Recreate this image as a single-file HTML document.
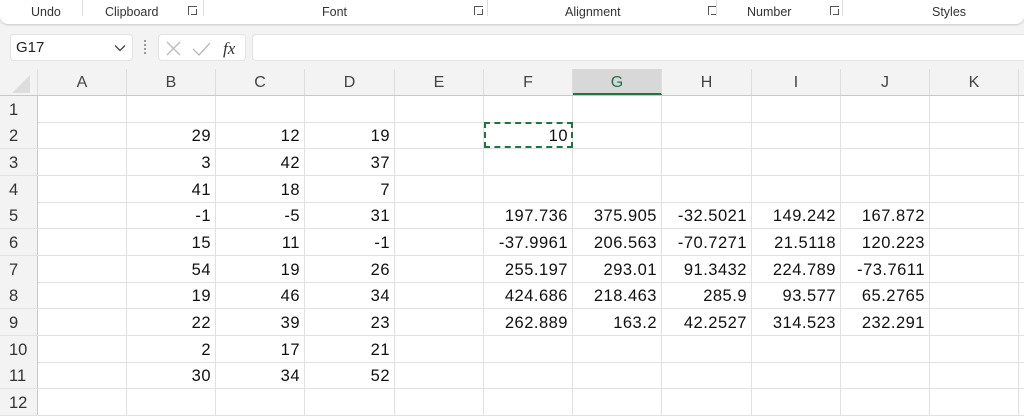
<!DOCTYPE html>
<html><head><style>
*{margin:0;padding:0;box-sizing:border-box}
body{width:1024px;height:420px;overflow:hidden;background:#f3f3f3;font-family:"Liberation Sans",sans-serif;position:relative}
.rib{position:absolute;left:0;top:0;width:1024px;height:24px;background:#fff;border-radius:0 0 8px 8px;box-shadow:0 1px 2px rgba(0,0,0,.18);font-size:12.5px;color:#333}
.rib span{position:absolute;top:5px}
.sep{position:absolute;top:0;width:1px;height:16px;background:#ddd}
.ic{position:absolute;top:6px;width:9px;height:9px;border:1px solid #555;border-right:none;border-bottom:none}
.ic:after{content:"";position:absolute;left:2px;top:2px;width:5px;height:5px;border-right:1px solid #555;border-bottom:1px solid #555}
.box{position:absolute;background:#fff;border:1px solid #e3e3e3;border-radius:4px}
.sheet{position:absolute;left:0;top:69px;width:1024px;height:351px;background:#fff}
.row{position:absolute;left:0;width:1024px;height:27px;display:flex;border-bottom:1px solid #e1e1e1}
.row div{height:100%;border-right:1px solid #e1e1e1;text-align:right;padding-right:4px;font-size:16.5px;letter-spacing:.5px;line-height:29px;color:#111}
.row div:first-child{width:38px;text-align:left;padding-left:9px;background:#f3f3f3;border-right:1px solid #c8c8c8;color:#333;letter-spacing:0}
.c1,.c2,.c3,.c5,.c6,.c7,.c9,.c10,.c11{width:89px}
.c4,.c8{width:90px}
.hd{position:absolute;left:0;top:0;width:1024px;height:27px;display:flex;background:#f3f3f3;border-bottom:1px solid #c8c8c8}
.hd div{height:100%;text-align:center;font-size:16px;line-height:28px;color:#444;border-right:1px solid #ddd}
.hd div:first-child{width:38px}
</style></head><body>
<div class="rib">
<span style="left:31px">Undo</span>
<div class="sep" style="left:82px"></div>
<span style="left:105px">Clipboard</span><div class="ic" style="left:188px"></div>
<div class="sep" style="left:203px"></div>
<span style="left:322px">Font</span><div class="ic" style="left:474px"></div>
<div class="sep" style="left:487px"></div>
<span style="left:565px">Alignment</span><div class="ic" style="left:708px"></div>
<div class="sep" style="left:716px"></div>
<span style="left:747px">Number</span><div class="ic" style="left:830px"></div>
<div class="sep" style="left:842px"></div>
<span style="left:932px">Styles</span>
</div>
<div class="box" style="left:10px;top:34px;width:123px;height:27px;font-size:15px;line-height:25px;padding-left:5px;color:#222">G17
<svg style="position:absolute;right:6px;top:9px" width="12" height="8"><path d="M1 1.5 6 6.5 11 1.5" stroke="#444" stroke-width="1.3" fill="none"/></svg></div>
<div style="position:absolute;left:144px;top:40px;width:2px;height:14px;border-left:2px dotted #999"></div>
<div class="box" style="left:158px;top:34px;width:88px;height:27px">
<svg style="position:absolute;left:6px;top:5px" width="80" height="18"><path d="M2 2 15 15M15 2 2 15" stroke="#bbb" stroke-width="1.3"/><path d="M28 9 34 15 45 3" stroke="#bbb" stroke-width="1.3" fill="none"/><text x="58" y="14" font-family="Liberation Serif" font-style="italic" font-size="17" fill="#333">fx</text></svg></div>
<div class="box" style="left:252px;top:34px;width:780px;height:27px"></div>
<div class="sheet">
<div class="hd"><div><svg width="38" height="27"><path d="M30 24 30 6 12 24Z" fill="#ddd"/></svg></div><div class="c1">A</div><div class="c2">B</div><div class="c3">C</div><div class="c4">D</div><div class="c5">E</div><div class="c6">F</div><div class="c7" style="background:#d8d8d8;color:#217346;border-bottom:2px solid #217346">G</div><div class="c8">H</div><div class="c9">I</div><div class="c10">J</div><div class="c11">K</div></div>
<div class="row" style="top:27px"><div>1</div><div class="c1"></div><div class="c2"></div><div class="c3"></div><div class="c4"></div><div class="c5"></div><div class="c6"></div><div class="c7"></div><div class="c8"></div><div class="c9"></div><div class="c10"></div><div class="c11"></div></div>
<div class="row" style="top:53px"><div>2</div><div class="c1"></div><div class="c2">29</div><div class="c3">12</div><div class="c4">19</div><div class="c5"></div><div class="c6" style="outline:2px dashed #217346;outline-offset:-2px">10</div><div class="c7"></div><div class="c8"></div><div class="c9"></div><div class="c10"></div><div class="c11"></div></div>
<div class="row" style="top:80px"><div>3</div><div class="c1"></div><div class="c2">3</div><div class="c3">42</div><div class="c4">37</div><div class="c5"></div><div class="c6"></div><div class="c7"></div><div class="c8"></div><div class="c9"></div><div class="c10"></div><div class="c11"></div></div>
<div class="row" style="top:107px"><div>4</div><div class="c1"></div><div class="c2">41</div><div class="c3">18</div><div class="c4">7</div><div class="c5"></div><div class="c6"></div><div class="c7"></div><div class="c8"></div><div class="c9"></div><div class="c10"></div><div class="c11"></div></div>
<div class="row" style="top:133px"><div>5</div><div class="c1"></div><div class="c2">-1</div><div class="c3">-5</div><div class="c4">31</div><div class="c5"></div><div class="c6">197.736</div><div class="c7">375.905</div><div class="c8">-32.5021</div><div class="c9">149.242</div><div class="c10">167.872</div><div class="c11"></div></div>
<div class="row" style="top:160px"><div>6</div><div class="c1"></div><div class="c2">15</div><div class="c3">11</div><div class="c4">-1</div><div class="c5"></div><div class="c6">-37.9961</div><div class="c7">206.563</div><div class="c8">-70.7271</div><div class="c9">21.5118</div><div class="c10">120.223</div><div class="c11"></div></div>
<div class="row" style="top:187px"><div>7</div><div class="c1"></div><div class="c2">54</div><div class="c3">19</div><div class="c4">26</div><div class="c5"></div><div class="c6">255.197</div><div class="c7">293.01</div><div class="c8">91.3432</div><div class="c9">224.789</div><div class="c10">-73.7611</div><div class="c11"></div></div>
<div class="row" style="top:213px"><div>8</div><div class="c1"></div><div class="c2">19</div><div class="c3">46</div><div class="c4">34</div><div class="c5"></div><div class="c6">424.686</div><div class="c7">218.463</div><div class="c8">285.9</div><div class="c9">93.577</div><div class="c10">65.2765</div><div class="c11"></div></div>
<div class="row" style="top:240px"><div>9</div><div class="c1"></div><div class="c2">22</div><div class="c3">39</div><div class="c4">23</div><div class="c5"></div><div class="c6">262.889</div><div class="c7">163.2</div><div class="c8">42.2527</div><div class="c9">314.523</div><div class="c10">232.291</div><div class="c11"></div></div>
<div class="row" style="top:267px"><div>10</div><div class="c1"></div><div class="c2">2</div><div class="c3">17</div><div class="c4">21</div><div class="c5"></div><div class="c6"></div><div class="c7"></div><div class="c8"></div><div class="c9"></div><div class="c10"></div><div class="c11"></div></div>
<div class="row" style="top:293px"><div>11</div><div class="c1"></div><div class="c2">30</div><div class="c3">34</div><div class="c4">52</div><div class="c5"></div><div class="c6"></div><div class="c7"></div><div class="c8"></div><div class="c9"></div><div class="c10"></div><div class="c11"></div></div>
<div class="row" style="top:320px"><div>12</div><div class="c1"></div><div class="c2"></div><div class="c3"></div><div class="c4"></div><div class="c5"></div><div class="c6"></div><div class="c7"></div><div class="c8"></div><div class="c9"></div><div class="c10"></div><div class="c11"></div></div>
</div>
</body></html>
